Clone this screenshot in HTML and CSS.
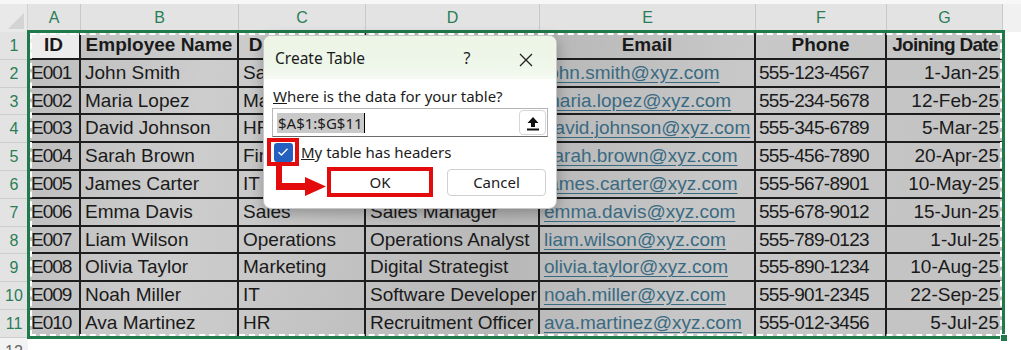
FILE: index.html
```html
<!DOCTYPE html>
<html lang="en">
<head>
    <meta charset="UTF-8">
    <title>Create Table</title>
    <link rel="stylesheet" href="styles.css">
</head>
<body>
    <div class="top-strip"></div>

    <div class="col-heads">
        <div class="corner"><span class="corner-tri"></span></div>
        <div class="col-head w-a">A</div>
        <div class="col-head w-b">B</div>
        <div class="col-head w-c">C</div>
        <div class="col-head w-d">D</div>
        <div class="col-head w-e">E</div>
        <div class="col-head w-f">F</div>
        <div class="col-head w-g">G</div>
        <div class="col-rest"></div>
    </div>

    <div class="sheet">
        <div class="row-heads">
            <div class="row-head">1</div>
            <div class="row-head">2</div>
            <div class="row-head">3</div>
            <div class="row-head">4</div>
            <div class="row-head">5</div>
            <div class="row-head">6</div>
            <div class="row-head">7</div>
            <div class="row-head">8</div>
            <div class="row-head">9</div>
            <div class="row-head">10</div>
            <div class="row-head">11</div>
            <div class="row-head idle">12</div>
        </div>

        <div class="range">
            <div class="cell head active">ID</div>
            <div class="cell head">Employee Name</div>
            <div class="cell head">Department</div>
            <div class="cell head">Designation</div>
            <div class="cell head">Email</div>
            <div class="cell head">Phone</div>
            <div class="cell head last tight">Joining Date</div>

            <div class="cell code">E001</div><div class="cell">John Smith</div><div class="cell">Sales</div><div class="cell">Sales Executive</div><div class="cell link">john.smith@xyz.com</div><div class="cell phone">555-123-4567</div><div class="cell num last">1-Jan-25</div>
            <div class="cell code">E002</div><div class="cell">Maria Lopez</div><div class="cell">Marketing</div><div class="cell">Marketing Manager</div><div class="cell link">maria.lopez@xyz.com</div><div class="cell phone">555-234-5678</div><div class="cell num last">12-Feb-25</div>
            <div class="cell code">E003</div><div class="cell">David Johnson</div><div class="cell">HR</div><div class="cell">HR Specialist</div><div class="cell link">david.johnson@xyz.com</div><div class="cell phone">555-345-6789</div><div class="cell num last">5-Mar-25</div>
            <div class="cell code">E004</div><div class="cell">Sarah Brown</div><div class="cell">Finance</div><div class="cell">Financial Analyst</div><div class="cell link">sarah.brown@xyz.com</div><div class="cell phone">555-456-7890</div><div class="cell num last">20-Apr-25</div>
            <div class="cell code">E005</div><div class="cell">James Carter</div><div class="cell">IT</div><div class="cell">IT Support</div><div class="cell link">james.carter@xyz.com</div><div class="cell phone">555-567-8901</div><div class="cell num last">10-May-25</div>
            <div class="cell code">E006</div><div class="cell">Emma Davis</div><div class="cell">Sales</div><div class="cell">Sales Manager</div><div class="cell link">emma.davis@xyz.com</div><div class="cell phone">555-678-9012</div><div class="cell num last">15-Jun-25</div>
            <div class="cell code">E007</div><div class="cell">Liam Wilson</div><div class="cell">Operations</div><div class="cell">Operations Analyst</div><div class="cell link">liam.wilson@xyz.com</div><div class="cell phone">555-789-0123</div><div class="cell num last">1-Jul-25</div>
            <div class="cell code">E008</div><div class="cell">Olivia Taylor</div><div class="cell">Marketing</div><div class="cell">Digital Strategist</div><div class="cell link">olivia.taylor@xyz.com</div><div class="cell phone">555-890-1234</div><div class="cell num last">10-Aug-25</div>
            <div class="cell code">E009</div><div class="cell">Noah Miller</div><div class="cell">IT</div><div class="cell">Software Developer</div><div class="cell link">noah.miller@xyz.com</div><div class="cell phone">555-901-2345</div><div class="cell num last">22-Sep-25</div>
            <div class="cell code">E010</div><div class="cell">Ava Martinez</div><div class="cell">HR</div><div class="cell">Recruitment Officer</div><div class="cell link">ava.martinez@xyz.com</div><div class="cell phone">555-012-3456</div><div class="cell num last">5-Jul-25</div>

            <span class="fill-handle"></span>
        </div>
    </div>

    <!-- Create Table dialog, floating over the sheet -->
    <div class="dialog">
        <div class="dlg-title">
            <span class="dlg-name">Create Table</span>
            <span class="dlg-help">?</span>
            <span class="dlg-close">
                <svg width="14" height="14" viewBox="0 0 14 14"><path d="M1 1L13 13M13 1L1 13" stroke="#222" stroke-width="1.3" fill="none"/></svg>
            </span>
        </div>
        <div class="dlg-body">
            <div class="prompt"><u>W</u>here is the data for your table?</div>
            <div class="ref-input">
                <span class="ref-sel">$A$1:$G$11</span><span class="caret"></span>
                <span class="ref-btn">
                    <svg width="14" height="16" viewBox="0 0 14 16"><path d="M7 2L1.5 8H5V12H9V8H12.5Z" fill="#111"/><rect x="1" y="13.5" width="12" height="2" fill="#111"/></svg>
                </span>
            </div>
            <div class="check-row">
                <span class="mark-box">
                    <span class="checkbox">
                        <svg width="12" height="10" viewBox="0 0 12 10"><path d="M1.5 5.2L4.5 8L10.5 1.8" stroke="#fff" stroke-width="1.3" fill="none"/></svg>
                    </span>
                </span>
                <span class="check-label"><u>M</u>y table has headers</span>
            </div>
            <div class="btn-row">
                <span class="mark-ok"><span class="btn ok">OK</span></span>
                <span class="btn cancel">Cancel</span>
            </div>
        </div>
        <svg class="arrow" width="70" height="40" viewBox="0 0 70 40">
            <rect x="13" y="4" width="6" height="25" fill="#e30b0b"/>
            <rect x="13" y="22" width="32" height="7" fill="#e30b0b"/>
            <polygon points="42,16 63,25.5 42,35" fill="#e30b0b"/>
        </svg>
    </div>
</body>
</html>
```

FILE: styles.css
```css
body {
    margin: 0;
    width: 1021px;
    height: 350px;
    overflow: hidden;
    position: relative;
    background-color: #fff;
    font-family: "Liberation Sans", Arial, sans-serif;
    color: #1a1a1a;
}

.top-strip {
    height: 4px;
    background-color: #f7f7f7;
}

/* column letters */
.col-heads {
    display: flex;
    height: 28px;
}

.corner {
    width: 28px;
    flex: none;
    position: relative;
    background-color: #e9e9e9;
    box-sizing: border-box;
    border-right: 1px solid #d2d2d2;
}

.corner-tri {
    position: absolute;
    right: 3px;
    bottom: 3px;
    width: 0;
    height: 0;
    border-left: 16px solid transparent;
    border-bottom: 16px solid #d4d4d4;
}

.col-head {
    flex: none;
    box-sizing: border-box;
    background-color: #e3e3e3;
    border-right: 1px solid #c9c9c9;
    color: #2a7d57;
    font-size: 16px;
    text-align: center;
    line-height: 27px;
}

.w-a { width: 53px; }
.w-b { width: 158px; }
.w-c { width: 127px; }
.w-d { width: 174px; }
.w-e { width: 216px; }
.w-f { width: 131px; }
.w-g { width: 116px; }

.col-rest {
    flex: 1;
    background-color: #f1f1f1;
}

/* rows */
.sheet {
    display: flex;
    align-items: flex-start;
}

.row-heads {
    width: 28px;
    flex: none;
}

.row-head {
    height: 27.8px;
    box-sizing: border-box;
    background-color: #e3e3e3;
    border-bottom: 1px solid #cdcdcd;
    color: #2a7d57;
    font-size: 16px;
    line-height: 27px;
    text-align: center;
}

.row-head.idle {
    background-color: #f3f3f3;
    color: #666;
}

.range {
    position: relative;
    display: grid;
    grid-template-columns: 53px 158px 127px 174px 216px 131px 116px;
    grid-auto-rows: 27.8px;
    background: linear-gradient(100deg, #bdbdbd 0%, #cdcdcd 18%, #c0c0c0 38%, #b7b7b7 50%, #c8c8c8 70%, #c2c2c2 100%);
}

.range::after {
    content: "";
    position: absolute;
    left: -1px;
    top: -2px;
    right: -2px;
    bottom: -1px;
    border: 3px solid #217a4a;
}

.range::before {
    content: "";
    position: absolute;
    left: 2px;
    top: 1px;
    right: 1px;
    bottom: 2px;
    border: 2px dashed #fff;
    z-index: 1;
}

.fill-handle {
    position: absolute;
    right: -5px;
    bottom: -4px;
    width: 6px;
    height: 6px;
    background-color: #217a4a;
    border: 1px solid #fff;
    z-index: 2;
}

.cell {
    box-sizing: border-box;
    border-right: 2px solid #1d1d1d;
    border-bottom: 2px solid #1d1d1d;
    padding: 0 4px;
    font-size: 19px;
    line-height: 26px;
    white-space: nowrap;
    overflow: hidden;
}

.cell.last {
    border-right: none;
}

.cell.head {
    font-weight: bold;
    text-align: center;
    padding: 0 2px;
}

.cell.head.tight {
    letter-spacing: -0.7px;
    padding: 0;
}

.cell.active {
    background-color: #ececec;
}

.cell.num {
    text-align: right;
}

.cell.code {
    padding-left: 3px;
    letter-spacing: -1px;
}

.cell.phone {
    padding-left: 3px;
    letter-spacing: -0.7px;
}

.cell.link {
    color: #3a6a82;
    text-decoration: underline;
    text-underline-offset: 3px;
}

/* dialog */
.dialog {
    position: absolute;
    left: 263px;
    top: 35px;
    width: 294px;
    height: 174px;
    box-sizing: border-box;
    background-color: #fff;
    border: 1px solid #c8c8c8;
    border-radius: 8px;
    box-shadow: 0 4px 14px rgba(0, 0, 0, 0.28);
    font-family: "Noto Sans", "Open Sans", sans-serif;
    font-size: 15px;
    color: #1b1b1b;
    overflow: hidden;
}

.dlg-title {
    height: 43px;
    display: flex;
    align-items: center;
    background: linear-gradient(180deg, #edf5e6 0%, #eff6ea 70%, #f6faf3 100%);
    padding-left: 11px;
}

.dlg-name {
    font-size: 15.5px;
    flex: 1;
}

.dlg-help {
    width: 20px;
    text-align: center;
    margin-right: 42px;
    font-size: 16px;
}

.dlg-close {
    width: 14px;
    height: 14px;
    margin-right: 23px;
}

.dlg-body {
    padding: 7px 0 0 8px;
}

.prompt {
    height: 21px;
    line-height: 21px;
    padding-left: 1px;
}

.ref-input {
    width: 276px;
    height: 29px;
    box-sizing: border-box;
    margin-top: 1px;
    border: 1px solid #b5b5b5;
    border-bottom-color: #6a6a6a;
    display: flex;
    align-items: center;
    padding-left: 4px;
}

.ref-sel {
    background-color: #c9c9c9;
    line-height: 20px;
    padding: 0 1px;
}

.caret {
    width: 1px;
    height: 20px;
    background-color: #000;
}

.ref-btn {
    margin-left: auto;
    margin-right: 1px;
    width: 27px;
    height: 25px;
    box-sizing: border-box;
    border: 1px solid #d6d6d6;
    border-radius: 4px;
    display: flex;
    align-items: center;
    justify-content: center;
}

.check-row {
    display: flex;
    align-items: center;
    margin-top: 1px;
    margin-left: -5px;
    height: 28px;
}

.mark-box {
    width: 32px;
    height: 28px;
    box-sizing: border-box;
    border: 4px solid #e30b0b;
    display: flex;
    align-items: center;
    justify-content: center;
}

.checkbox {
    width: 19px;
    height: 19px;
    border-radius: 3px;
    background-color: #2360c0;
    display: flex;
    align-items: center;
    justify-content: center;
}

.check-label {
    margin-left: 2px;
}

.btn-row {
    display: flex;
    align-items: center;
    margin-top: 1px;
    margin-left: 55px;
}

.mark-ok {
    border: 4px solid #e30b0b;
    box-sizing: border-box;
    width: 106px;
    height: 30px;
    display: flex;
}

.btn {
    display: flex;
    align-items: center;
    justify-content: center;
    box-sizing: border-box;
}

.btn.ok {
    flex: 1;
    background-color: #fff;
}

.btn.cancel {
    width: 99px;
    height: 27px;
    margin-left: 14px;
    border: 1px solid #d0d0d0;
    border-radius: 4px;
}

.arrow {
    position: absolute;
    left: -1px;
    top: 125px;
}
```
